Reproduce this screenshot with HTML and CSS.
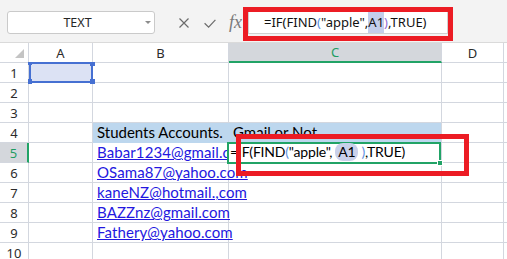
FILE: index.html
```html
<!DOCTYPE html>
<html>
<head>
<meta charset="utf-8">
<link rel="stylesheet" href="styles.css">
</head>
<body>
<div class="toolbar">
  <div class="namebox"><span class="name">TEXT</span><span class="caret"></span></div>
  <div class="fxbtns">
    <svg class="ic-x" width="10" height="10" viewBox="0 0 10 10"><path d="M0.5 0.5L9.5 9.5M9.5 0.5L0.5 9.5" stroke="#6b6b6b" stroke-width="1.2" fill="none"/></svg>
    <svg class="ic-ok" width="12" height="9" viewBox="0 0 12 9"><path d="M0.6 4.2L4.6 8.1L11.4 0.8" stroke="#6b6b6b" stroke-width="1.2" fill="none"/></svg>
    <span class="fx">fx</span>
  </div>
  <div class="formula">=IF(FIND<span class="pb">(</span>"apple",<span class="ref">A1</span><span class="pp">)</span>,TRUE)</div>
  <div class="redbox rb1"></div>
</div>
<div class="sheet">
  <div class="c h corner"><span class="tri"></span></div>
  <div class="c h">A</div>
  <div class="c h">B</div>
  <div class="c h selc">C</div>
  <div class="c h">D</div>
  <div class="c h"></div>

  <div class="c h rh">1</div><div class="c"></div><div class="c"></div><div class="c"></div><div class="c"></div><div class="c"></div>
  <div class="c h rh">2</div><div class="c"></div><div class="c"></div><div class="c"></div><div class="c"></div><div class="c"></div>
  <div class="c h rh">3</div><div class="c"></div><div class="c"></div><div class="c"></div><div class="c"></div><div class="c"></div>
  <div class="c h rh">4</div><div class="c"></div><div class="c fill fill-b">Students Accounts.</div><div class="c fill">Gmail or Not</div><div class="c"></div><div class="c"></div>
  <div class="c h rh selr">5</div><div class="c"></div><div class="c"><span class="lnk">Babar1234@gmail.com</span></div><div class="c"></div><div class="c"></div><div class="c"></div>
  <div class="c h rh">6</div><div class="c"></div><div class="c"><span class="lnk">OSama87@yahoo.com</span></div><div class="c"></div><div class="c"></div><div class="c"></div>
  <div class="c h rh">7</div><div class="c"></div><div class="c"><span class="lnk">kaneNZ@hotmail.,com</span></div><div class="c"></div><div class="c"></div><div class="c"></div>
  <div class="c h rh">8</div><div class="c"></div><div class="c"><span class="lnk">BAZZnz@gmail.com</span></div><div class="c"></div><div class="c"></div><div class="c"></div>
  <div class="c h rh">9</div><div class="c"></div><div class="c"><span class="lnk">Fathery@yahoo.com</span></div><div class="c"></div><div class="c"></div><div class="c"></div>
  <div class="c h rh">10</div><div class="c"></div><div class="c"></div><div class="c"></div><div class="c"></div><div class="c"></div>

  <div class="sel-a1"><span class="hd tl"></span><span class="hd tr"></span><span class="hd bl"></span><span class="hd br"></span></div>
  <div class="edit">=IF(FIND<span class="pb">(</span>"apple",<span class="ref">A1</span><span class="pb">)</span>,TRUE)<span class="fh"></span></div>
  <div class="redbox rb2"></div>
</div>
</body>
</html>
```
FILE: styles.css
```css
* { box-sizing: border-box; }
html, body { margin: 0; padding: 0; }
body {
  width: 507px;
  height: 259px;
  overflow: hidden;
  background: #fff;
  font-family: "Lato", "Liberation Sans", sans-serif;
}

/* ---------- formula toolbar ---------- */
.toolbar {
  position: relative;
  display: flex;
  align-items: flex-start;
  height: 43px;
  padding: 11px 0 0 7px;
  background: #f3f3f3;
  border-bottom: 1px solid #dadada;
}
.namebox {
  display: flex;
  align-items: center;
  width: 148px;
  height: 23px;
  background: #fff;
  border: 1px solid #cacaca;
  border-radius: 3px;
  font: 12.5px "Noto Sans", sans-serif;
  color: #262626;
}
.namebox .name { flex: 1; text-align: center; padding-left: 2px; }
.namebox .caret {
  width: 0; height: 0;
  border-left: 3px solid transparent;
  border-right: 3px solid transparent;
  border-top: 3px solid #8c8c8c;
  margin-right: 3px;
}
.fxbtns {
  display: flex;
  align-items: center;
  height: 23px;
  margin-left: 24px;
}
.ic-x { margin-top: 1px; }
.ic-ok { margin-left: 15px; margin-top: 2px; }
.fx {
  margin-left: 13px;
  font: italic 18px "Liberation Serif", serif;
  color: #7a7a7a;
  line-height: 23px;
}
.formula {
  width: 200px;
  height: 23px;
  margin-left: 6px;
  background: #fff;
  border: 1px solid #d0d0d0;
  padding-left: 15px;
  font: 13px "Noto Sans", sans-serif;
  line-height: 21px;
  color: #111;
  white-space: nowrap;
  overflow: hidden;
}
.formula .ref { background: #c4ceeb; display: inline-block; }
.pb { color: #5d8fe0; }
.pp { color: #8f6bd6; }

.redbox { position: absolute; border: 5px solid #ec1c24; }
.rb1 { left: 243px; top: 7px; width: 210px; height: 34px; }

/* ---------- sheet ---------- */
.sheet {
  position: relative;
  display: grid;
  grid-template-columns: 29px 64px 136px 213px 62px 1fr;
  grid-template-rows: repeat(11, 20px);
}
.c {
  display: flex;
  align-items: flex-end;
  min-width: 0;
  padding: 0 3px 1px 4px;
  border-right: 1px solid #d3d7df;
  border-bottom: 1px solid #d3d7df;
  font-size: 15px;
  line-height: 18px;
  color: #000;
  white-space: nowrap;
}
.h {
  justify-content: center;
  align-items: center;
  padding: 0;
  font: 13px "Noto Sans", sans-serif;
  color: #2b2b2b;
  background: #fff;
}
.corner { position: relative; }
.tri {
  position: absolute;
  right: 4px;
  bottom: 4px;
  width: 0; height: 0;
  border-left: 9px solid transparent;
  border-bottom: 9px solid #c4c4c4;
}
.selc {
  background: #d4d7dc;
  color: #1f9d63;
  border-bottom: 2px solid #21a366;
}
.selr {
  background: #d4d7dc;
  color: #1f9d63;
  border-right: 2px solid #21a366;
}
.fill { background: #bdd7ee; border-bottom-color: #bdd7ee; }
.fill-b { border-right-color: #bdd7ee; }
.lnk { color: #2317e0; text-decoration: underline; text-underline-offset: 1px; letter-spacing: 0.1px; }

.sel-a1 {
  position: absolute;
  left: 29px; top: 19px;
  width: 64px; height: 21px;
  border: 2px solid #4670d2;
  background: #dce2f4;
}
.hd { position: absolute; width: 5px; height: 5px; background: #4670d2; }
.hd.tl { left: -3px; top: -2px; width: 4px; height: 3px; }
.hd.tr { right: -4px; top: -2px; height: 4px; }
.hd.bl { left: -3px; bottom: -3px; width: 4px; }
.hd.br { right: -4px; bottom: -3px; }

.edit {
  position: absolute;
  left: 227px; top: 99px;
  width: 214px; height: 22px;
  display: flex;
  align-items: flex-end;
  padding: 0 0 1px 1px;
  border: 2px solid #21a366;
  background: #fff;
  font-size: 14px;
  letter-spacing: -0.2px;
  line-height: 18px;
  white-space: pre;
  color: #000;
}
.edit .ref {
  margin: 0 3px;
  padding: 0 3px;
  border-radius: 8px;
  background: #c9d0ea;
}
.fh {
  position: absolute;
  right: -4px; bottom: -4px;
  width: 6px; height: 6px;
  background: #21a366;
  border: 1px solid #fff;
}
.rb2 { left: 236px; top: 91px; width: 233px; height: 42px; }
```
